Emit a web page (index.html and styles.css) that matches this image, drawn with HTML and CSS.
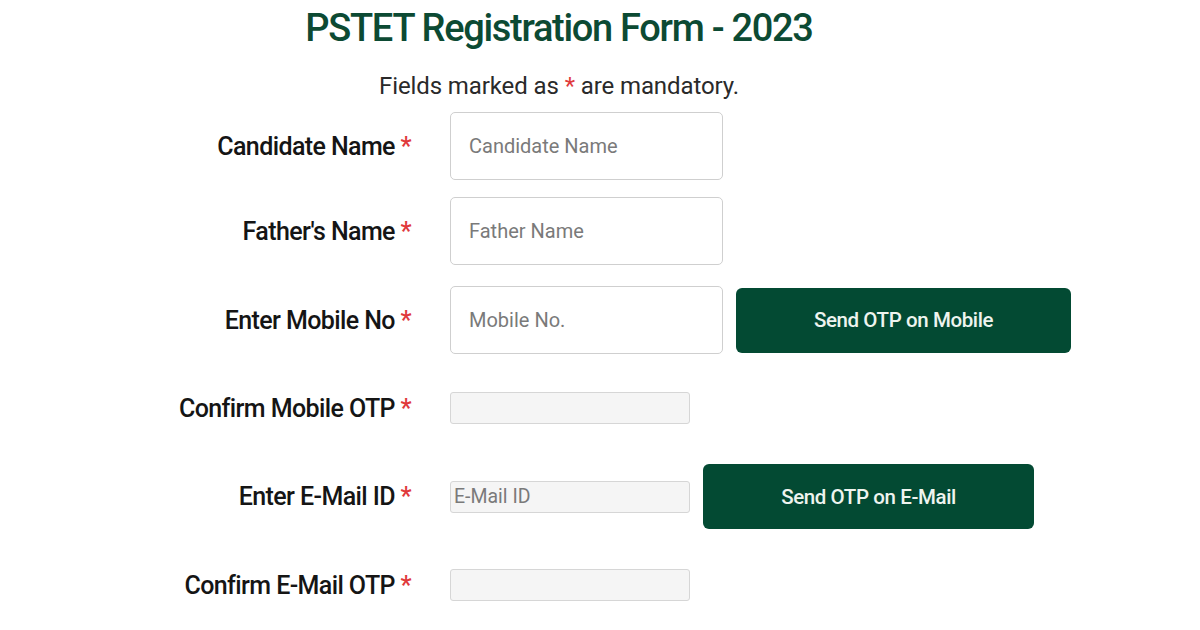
FILE: index.html
```html
<!DOCTYPE html>
<html lang="en">
<head>
    <meta charset="UTF-8">
    <meta name="viewport" content="width=device-width, initial-scale=1.0">
    <title>PSTET Registration Form - 2023</title>
    <link rel="stylesheet" href="styles.css">
</head>
<body>
    <div class="container">
        <h1 class="title">PSTET Registration Form - 2023</h1>
        <p class="note">Fields marked as <span class="req">*</span> are mandatory.</p>

        <form class="reg-form" onsubmit="return false;">
            <div class="form-row row-1">
                <label class="form-label" for="candName">Candidate Name <span class="req">*</span></label>
                <input class="big-input" id="candName" type="text" placeholder="Candidate Name">
            </div>

            <div class="form-row row-2">
                <label class="form-label" for="fatherName">Father's Name <span class="req">*</span></label>
                <input class="big-input" id="fatherName" type="text" placeholder="Father Name">
            </div>

            <div class="form-row row-3">
                <label class="form-label" for="mobile">Enter Mobile No <span class="req">*</span></label>
                <input class="big-input" id="mobile" type="text" placeholder="Mobile No.">
                <button class="otp-btn mobile-btn" type="button">Send OTP on Mobile</button>
            </div>

            <div class="form-row row-4">
                <label class="form-label" for="mobileOtp">Confirm Mobile OTP <span class="req">*</span></label>
                <input class="small-input" id="mobileOtp" type="text">
            </div>

            <div class="form-row row-5">
                <label class="form-label" for="email">Enter E-Mail ID <span class="req">*</span></label>
                <input class="small-input" id="email" type="text" placeholder="E-Mail ID">
                <button class="otp-btn mail-btn" type="button">Send OTP on E-Mail</button>
            </div>

            <div class="form-row row-6">
                <label class="form-label" for="emailOtp">Confirm E-Mail OTP <span class="req">*</span></label>
                <input class="small-input" id="emailOtp" type="text">
            </div>
        </form>
    </div>
</body>
</html>
```

FILE: styles.css
```css
* {
    margin: 0;
    padding: 0;
    box-sizing: border-box;
    font-family: Roboto, "Noto Sans", sans-serif;
}

body {
    background: #fff;
    overflow: hidden;
}

.container {
    width: 1118px;
    padding-top: 6px;
}

.title {
    text-align: center;
    font-size: 38px;
    font-weight: 500;
    color: #0c4a33;
    line-height: 44px;
    letter-spacing: -1.3px;
}

.note {
    text-align: center;
    font-size: 24px;
    color: #2a2a2a;
    line-height: 30px;
    margin-top: 21px;
    letter-spacing: -0.1px;
}

.req {
    color: #e0393b;
}

.reg-form {
    margin-top: 11px;
}

.form-row {
    display: flex;
    align-items: center;
}

.row-1 { margin-bottom: 17px; }
.row-2 { margin-bottom: 21px; }
.row-3 { margin-bottom: 38px; }
.row-4 { margin-bottom: 40px; }
.row-5 { margin-bottom: 40px; }

.form-label {
    width: 411px;
    margin-right: 39px;
    text-align: right;
    font-size: 25px;
    font-weight: 500;
    color: #151515;
    letter-spacing: -0.6px;
}

.big-input {
    width: 273px;
    height: 68px;
    padding: 0 18px;
    border: 1px solid #cfcfcf;
    border-radius: 5px;
    background: #fff;
    font-size: 20px;
    color: #333;
}

.small-input {
    width: 240px;
    height: 32px;
    padding: 0 3px;
    border: 1px solid #d6d6d6;
    border-radius: 3px;
    background: #f5f5f5;
    font-size: 19.5px;
    color: #333;
}

.big-input::placeholder,
.small-input::placeholder {
    color: #7a7a7a;
}

.otp-btn {
    height: 65px;
    border: none;
    border-radius: 6px;
    background: #034a33;
    color: #eef4ef;
    font-size: 20.5px;
    font-weight: 500;
    cursor: pointer;
    letter-spacing: -0.4px;
}

.mobile-btn {
    width: 335px;
    margin-left: 13px;
}

.mail-btn {
    width: 331px;
    margin-left: 13px;
}
```
